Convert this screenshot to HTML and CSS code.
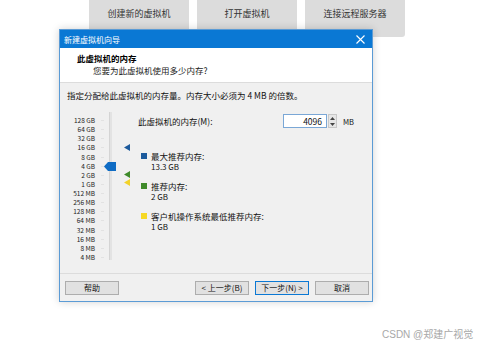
FILE: index.html
```html
<!DOCTYPE html>
<html lang="zh-CN">
<head>
    <meta charset="UTF-8">
    <title>新建虚拟机向导</title>
    <link rel="stylesheet" href="styles.css">
</head>
<body>
<div id="home">
    <div class="tile">创建新的虚拟机</div>
    <div class="tile">打开虚拟机</div>
    <div class="tile">连接远程服务器</div>
</div>

<div id="wizard">
    <div class="titleBar">
        <span>新建虚拟机向导</span>
        <svg class="close" width="9" height="9" viewBox="0 0 9 9"><path d="M0.5 0.5 L8.5 8.5 M8.5 0.5 L0.5 8.5" stroke="#fff" stroke-width="1.1"/></svg>
    </div>
    <div class="header">
        <div class="headTitle">此虚拟机的内存</div>
        <div class="headSub">您要为此虚拟机使用多少内存?</div>
    </div>
    <div class="content">
        <div class="intro">指定分配给此虚拟机的内存量。内存大小必须为 4 MB 的倍数。</div>
        <div class="memory">
            <div class="slider">
                <div class="scale">
                    <div>128 GB</div><div>64 GB</div><div>32 GB</div><div>16 GB</div>
                    <div>8 GB</div><div>4 GB</div><div>2 GB</div><div>1 GB</div>
                    <div>512 MB</div><div>256 MB</div><div>128 MB</div><div>64 MB</div>
                    <div>32 MB</div><div>16 MB</div><div>8 MB</div><div>4 MB</div>
                </div>
                <div class="ticks">
                    <i></i><i></i><i></i><i></i><i></i><i></i><i></i><i></i>
                    <i></i><i></i><i></i><i></i><i></i><i></i><i></i><i></i>
                </div>
                <div class="track"></div>
                <svg class="thumb" width="12" height="9" viewBox="0 0 12 9"><path d="M0 4.5 L4 0 H12 V9 H4 Z" fill="#0f6cc4"/></svg>
                <svg class="marker maxMark" width="6" height="7" viewBox="0 0 6 7"><path d="M0 3.5 L6 0 V7 Z" fill="#1c5a9c"/></svg>
                <svg class="marker recMark" width="6" height="7" viewBox="0 0 6 7"><path d="M0 3.5 L6 0 V7 Z" fill="#3f8a2a"/></svg>
                <svg class="marker minMark" width="6" height="7" viewBox="0 0 6 7"><path d="M0 3.5 L6 0 V7 Z" fill="#f2d22a"/></svg>
            </div>
            <div class="info">
                <div class="sizeRow">
                    <span class="sizeLabel">此虚拟机的内存(M):</span>
                    <div class="spin">
                        <div class="spinInput">4096</div>
                        <div class="spinBtns">
                            <svg width="5" height="3" viewBox="0 0 5 3"><path d="M0 3 L2.5 0 L5 3 Z" fill="#444"/></svg>
                            <svg width="5" height="3" viewBox="0 0 5 3"><path d="M0 0 L2.5 3 L5 0 Z" fill="#444"/></svg>
                        </div>
                    </div>
                    <span class="unit">MB</span>
                </div>
                <div class="legend">
                    <div class="item">
                        <i class="sq blue"></i>
                        <div><div>最大推荐内存:</div><div>13.3 GB</div></div>
                    </div>
                    <div class="item">
                        <i class="sq green"></i>
                        <div><div>推荐内存:</div><div>2 GB</div></div>
                    </div>
                    <div class="item">
                        <i class="sq yellow"></i>
                        <div><div>客户机操作系统最低推荐内存:</div><div>1 GB</div></div>
                    </div>
                </div>
            </div>
        </div>
    </div>
    <div class="footer">
        <button class="btn">帮助</button>
        <div class="spacer"></div>
        <button class="btn">&lt; 上一步(B)</button>
        <button class="btn focus">下一步(N) &gt;</button>
        <button class="btn">取消</button>
    </div>
</div>

<div id="mark">CSDN @郑建广视觉</div>
</body>
</html>
```

FILE: styles.css
```css
body {
    margin: 0;
    width: 499px;
    height: 347px;
    background-color: #ffffff;
    font-family: "Noto Sans CJK SC", "Noto Sans", sans-serif;
    position: relative;
    overflow: hidden;
}
#home {
    display: flex;
    gap: 8px;
    padding-left: 89px;
}
.tile {
    width: 100px;
    height: 37px;
    background-color: #dcdcdc;
    border-radius: 0 0 3px 3px;
    font-size: 9px;
    color: #333;
    text-align: center;
    line-height: 28px;
}
#wizard {
    position: absolute;
    left: 59px;
    top: 29px;
    width: 314px;
    height: 273px;
    box-sizing: border-box;
    border: 1px solid #5b9bd5;
    background-color: #f0f0f0;
    box-shadow: 0 0 8px rgba(0,0,0,0.18);
    display: flex;
    flex-direction: column;
}
.titleBar {
    height: 18px;
    background-color: #0a78d4;
    color: #ffffff;
    font-size: 8px;
    display: flex;
    align-items: center;
    justify-content: space-between;
    padding: 0 7px 0 4px;
}
.header {
    height: 35px;
    background-color: #ffffff;
    border-bottom: 1px solid #dcdcdc;
    box-sizing: border-box;
    padding: 4px 0 0 17px;
    font-size: 8.5px;
    color: #000;
}
.headTitle {
    font-weight: bold;
    line-height: 12px;
}
.headSub {
    padding-left: 16px;
    line-height: 12px;
    color: #222;
}
.content {
    height: 190px;
    padding: 6px 0 0 7px;
    box-sizing: border-box;
    font-size: 8.5px;
    color: #111;
}
.intro {
    line-height: 12px;
}
.memory {
    display: flex;
    margin-top: 13px;
}
.slider {
    position: relative;
    width: 71px;
    height: 148px;
    display: flex;
}
.scale {
    width: 28px;
    text-align: right;
    font-size: 6.5px;
    color: #222;
    padding-top: 2px;
}
.scale div {
    height: 9.13px;
    line-height: 9.13px;
}
.ticks {
    width: 9px;
    padding-top: 2px;
    display: flex;
    flex-direction: column;
    align-items: flex-end;
}
.ticks i {
    display: block;
    height: 9.13px;
    width: 3px;
    background: linear-gradient(#e2e2e2, #e2e2e2) center / 3px 1px no-repeat;
}
.track {
    margin-left: 5px;
    margin-top: -2px;
    width: 2px;
    height: 148px;
    background-color: #e3e3e3;
    border-left: 1px solid #d4d4d4;
}
.thumb {
    position: absolute;
    left: 37px;
    top: 48px;
}
.marker {
    position: absolute;
    left: 57px;
}
.maxMark { top: 30px; }
.recMark { top: 57px; }
.minMark { top: 65px; }
.sizeRow {
    display: flex;
    align-items: center;
    height: 14px;
}
.sizeLabel {
    width: 145px;
}
.spin {
    display: flex;
    height: 14px;
}
.spinInput {
    width: 44px;
    height: 14px;
    box-sizing: border-box;
    border: 1px solid #7aa7d6;
    background-color: #ffffff;
    text-align: right;
    padding-right: 4px;
    line-height: 12px;
}
.spinBtns {
    width: 9px;
    margin-left: 1px;
    display: flex;
    flex-direction: column;
    align-items: center;
    justify-content: space-around;
    background-color: #e6e6e6;
    border: 1px solid #c8c8c8;
    box-sizing: border-box;
}
.unit {
    margin-left: 6px;
    font-size: 7.5px;
}
.legend {
    margin-top: 23px;
    display: flex;
    flex-direction: column;
    gap: 9px;
    line-height: 10.5px;
}
.item {
    display: flex;
    align-items: flex-start;
}
.sq {
    display: block;
    width: 6px;
    height: 6px;
    margin: 2px 4px 0 3px;
}
.blue { background-color: #1c5a9c; }
.green { background-color: #3f8a2a; }
.yellow { background-color: #f6d824; }
.item div div:last-child {
    font-size: 8px;
}
.footer {
    flex: 1;
    border-top: 1px solid #dcdcdc;
    display: flex;
    align-items: center;
    gap: 6px;
    padding: 0 3px 0 5px;
}
.spacer {
    flex: 1;
}
.btn {
    width: 54px;
    height: 14px;
    padding: 0;
    background-color: #e1e1e1;
    border: 1px solid #adadad;
    font-family: inherit;
    font-size: 8px;
    color: #111;
    line-height: 12px;
}
.focus {
    border-color: #0a78d4;
}
#mark {
    position: absolute;
    left: 382px;
    top: 326px;
    font-size: 10px;
    color: #a8a8a8;
    font-family: "Liberation Sans", "Noto Sans CJK SC", sans-serif;
}
```
